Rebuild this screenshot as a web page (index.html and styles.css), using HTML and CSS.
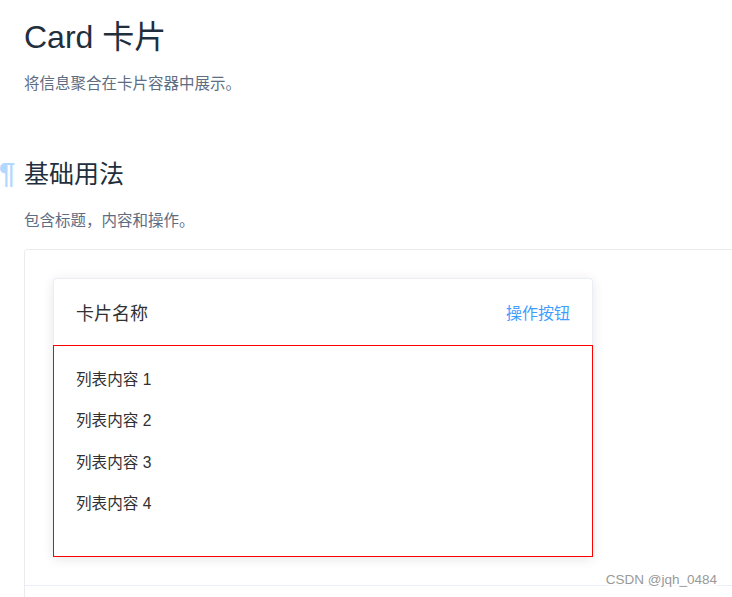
FILE: index.html
```html
<!DOCTYPE html>
<html lang="zh-CN">
<head>
<meta charset="utf-8">
<title>Card 卡片</title>
<link rel="stylesheet" href="styles.css">
</head>
<body>
<div class="page">
  <h2 class="title">Card 卡片</h2>
  <p class="desc">将信息聚合在卡片容器中展示。</p>
  <h3 class="section"><span class="anchor">¶</span>基础用法</h3>
  <p class="desc desc-sub">包含标题，内容和操作。</p>
  <div class="demo">
    <div class="demo-source">
      <div class="card">
        <div class="card-header">
          <span class="card-title">卡片名称</span>
          <span class="card-action">操作按钮</span>
        </div>
        <div class="card-body">
          <div class="item">列表内容 1</div>
          <div class="item">列表内容 2</div>
          <div class="item">列表内容 3</div>
          <div class="item">列表内容 4</div>
        </div>
      </div>
    </div>
    <div class="demo-control"></div>
  </div>
</div>
<div class="watermark">CSDN @jqh_0484</div>
</body>
</html>
```

FILE: styles.css
```css
html, body {
  margin: 0;
  padding: 0;
  background: #fff;
  overflow: hidden;
  height: 597px;
}
body {
  font-family: "Liberation Sans", "Noto Sans CJK SC", sans-serif;
  position: relative;
}
.page {
  padding: 14px 0 0 24px;
  width: 760px;
}
.title {
  margin: 0;
  font-size: 32px;
  font-weight: 400;
  line-height: 46px;
  color: #1f2f3d;
}
.desc {
  margin: 12px 0 0;
  font-size: 15.5px;
  line-height: 23px;
  color: #5e6d82;
}
.section {
  position: relative;
  margin: 61px 0 0;
  font-size: 25px;
  font-weight: 400;
  line-height: 36px;
  color: #1f2f3d;
}
.anchor {
  position: absolute;
  left: -25px;
  top: -1px;
  color: #b3d8ff;
  font-size: 29px;
  font-weight: 700;
}
.desc-sub {
  margin-top: 17px;
}
.demo {
  margin-top: 17px;
  border: 1px solid #ebebeb;
  border-radius: 3px;
}
.demo-source {
  padding: 28px 28px 28px 28px;
}
.demo-control {
  border-top: 1px solid #eaeefb;
  height: 44px;
}
.card {
  width: 540px;
  box-sizing: border-box;
  border: 1px solid #ebeef5;
  border-bottom: none;
  border-radius: 4px;
  background: #fff;
  box-shadow: 0 2px 12px rgba(0, 0, 0, 0.1);
  color: #303133;
}
.card-header {
  display: flex;
  justify-content: space-between;
  align-items: center;
  padding: 20px 22px;
  height: 26px;
}
.card-title {
  font-size: 18px;
}
.card-action {
  font-size: 16px;
  color: #409eff;
}
.card-body {
  margin: 0 -1px;
  border: 1px solid #ff0000;
  padding: 23px 22px 22px;
}
.item {
  font-size: 15.6px;
  line-height: 22px;
  margin-bottom: 19.3px;
}
.watermark {
  position: absolute;
  right: 15px;
  top: 571px;
  font-size: 13.5px;
  color: #999;
  line-height: 18px;
  background: rgba(255, 255, 255, 0.6);
}
```
